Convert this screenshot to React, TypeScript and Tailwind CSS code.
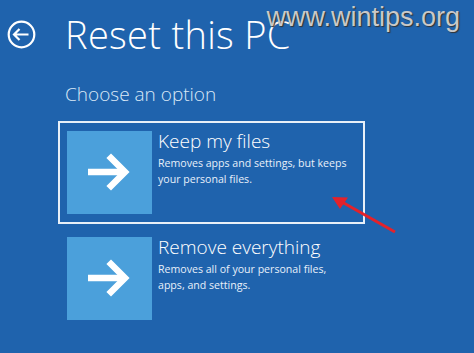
const Arrow = () => (
  <svg width="85" height="83" viewBox="0 0 85 83">
    <path d="M21 41H58" stroke="white" strokeWidth="6.5" fill="none" />
    <path d="M44 27L58 41L44 55" stroke="white" strokeWidth="6.5" fill="none" strokeLinecap="square" />
  </svg>
);

const Option = ({ title, desc, selected }: { title: string; desc: string[]; selected?: boolean }) => (
  <div
    className={`w-[307px] h-[103px] border-2 ${selected ? "border-[#e8f0f8]" : "border-transparent"} pl-[7px] pt-[8px] flex gap-[6px]`}
  >
    <div className="w-[85px] h-[83px] bg-[#4ba0db] shrink-0">
      <Arrow />
    </div>
    <div className="text-white">
      <div className="text-[19px] font-light leading-[22px] mt-[-1px]">{title}</div>
      <div className="text-[10.6px] leading-[16px] mt-[3px] text-[#e8f0fa]">
        {desc.map((d) => (
          <div key={d}>{d}</div>
        ))}
      </div>
    </div>
  </div>
);

export default function App() {
  return (
    <div className="w-[474px] h-[353px] bg-[#1f63ad] relative overflow-hidden font-['Open_Sans',sans-serif]">
      <div className="flex items-center pt-[12px] pl-[7px]">
        <svg width="29" height="29" viewBox="0 0 29 29">
          <circle cx="14.5" cy="14.5" r="12.8" stroke="white" strokeWidth="2.2" fill="none" />
          <path d="M7 14.5H21.5M12.5 9L7 14.5L12.5 20" stroke="white" strokeWidth="2.2" fill="none" />
        </svg>
        <div className="ml-[29px] text-white text-[38px] font-light leading-[44px] tracking-[0.3px]">Reset this PC</div>
      </div>
      <div className="pl-[65px] mt-[26px] text-[#dbe9f7] text-[19px] font-light leading-[24px]">Choose an option</div>
      <div className="pl-[58px] mt-[15px] flex flex-col gap-[3px]">
        <Option
          selected
          title="Keep my files"
          desc={["Removes apps and settings, but keeps", "your personal files."]}
        />
        <Option
          title="Remove everything"
          desc={["Removes all of your personal files,", "apps, and settings."]}
        />
      </div>
      <div
        className="absolute top-[1px] right-[14px] text-[27px] text-[#c9c9c9] font-['Liberation_Sans',sans-serif] leading-[32px]"
        style={{ textShadow: "1px 1px 1px #333" }}
      >
        www.wintips.org
      </div>
      <svg className="absolute left-[328px] top-[190px]" width="72" height="46" viewBox="0 0 72 46">
        <path d="M67 42L14 12" stroke="#e3222b" strokeWidth="3" fill="none" />
        <path d="M4 7L20 7.5L12 19Z" fill="#e3222b" />
      </svg>
    </div>
  );
}
